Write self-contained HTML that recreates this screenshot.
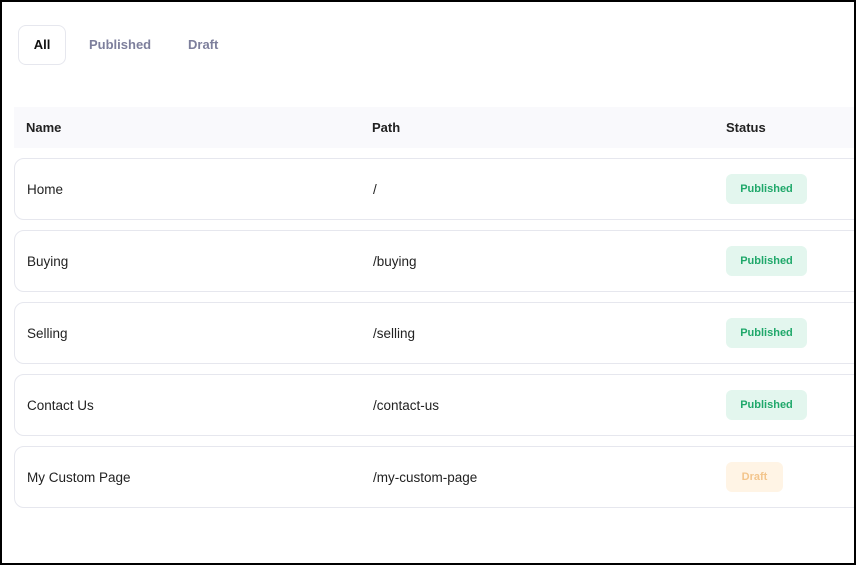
<!DOCTYPE html>
<html><head><style>
*{margin:0;padding:0;box-sizing:border-box}
body{width:856px;height:565px;background:#fff;font-family:"Liberation Sans",sans-serif;position:relative;overflow:hidden}
.frame{position:absolute;left:0;top:0;width:856px;height:565px;border:2px solid #000;pointer-events:none;z-index:5}
.tab{position:absolute;top:25px;height:40px;font-size:13px;font-weight:bold;line-height:40px;color:#7d7f9c}
.all{left:18px;width:48px;border:1px solid #e6e7ee;border-radius:8px;text-align:center;color:#111;line-height:38px}
.hdr{position:absolute;left:14px;top:107px;width:842px;height:41px;background:#f9f9fc;font-size:13px;font-weight:bold;color:#222}
.hdr span,.row span{position:absolute;top:0}
.row{position:absolute;left:14px;width:850px;height:62px;border:1px solid #e6e7ee;border-radius:10px;font-size:13.5px;color:#222}
.badge{position:absolute;left:711px;top:15px;height:30px;width:81px;text-align:center;border-radius:6px;font-size:11px;font-weight:bold;line-height:30px}
.pub{background:#e3f6ee;color:#1fa86a}
.dr{background:#fff4e5;color:#f3c58c;width:57px}
</style></head><body>
<div class="frame"></div>
<div class="tab all">All</div>
<div class="tab" style="left:89px">Published</div>
<div class="tab" style="left:188px">Draft</div>
<div class="hdr"><span style="left:12px;line-height:41px">Name</span><span style="left:358px;line-height:41px">Path</span><span style="left:712px;line-height:41px">Status</span></div>
<div class="row" style="top:158px"><span style="left:12px;line-height:62px">Home</span><span style="left:358px;line-height:62px">/</span><div class="badge pub">Published</div></div>
<div class="row" style="top:230px"><span style="left:12px;line-height:62px">Buying</span><span style="left:358px;line-height:62px">/buying</span><div class="badge pub">Published</div></div>
<div class="row" style="top:302px"><span style="left:12px;line-height:62px">Selling</span><span style="left:358px;line-height:62px">/selling</span><div class="badge pub">Published</div></div>
<div class="row" style="top:374px"><span style="left:12px;line-height:62px">Contact Us</span><span style="left:358px;line-height:62px">/contact-us</span><div class="badge pub">Published</div></div>
<div class="row" style="top:446px"><span style="left:12px;line-height:62px">My Custom Page</span><span style="left:358px;line-height:62px">/my-custom-page</span><div class="badge dr">Draft</div></div>
</body></html>
